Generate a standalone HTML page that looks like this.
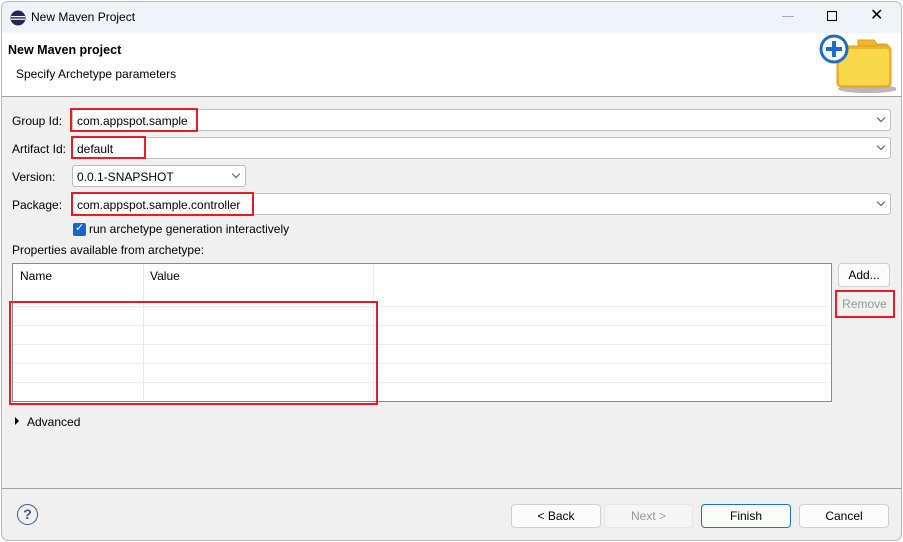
<!DOCTYPE html>
<html><head><style>
*{box-sizing:border-box;margin:0;padding:0}
body{width:903px;height:542px;background:#fff;font-family:"Liberation Sans",sans-serif;font-size:12px;color:#000;position:relative;overflow:hidden}
.abs{position:absolute}
.win{left:1px;top:1px;width:901px;height:540px;border:1px solid #b8b8b8;border-radius:7px;background:#f0f0f0;overflow:hidden}
.combo{position:absolute;background:#fff;border:1px solid #c4c4c4;border-radius:3px;height:22px}
.combo span{position:absolute;left:4px;top:4px}
.chev{position:absolute;right:6px;top:5px;width:6px;height:6px;border-right:1px solid #555;border-bottom:1px solid #555;transform:rotate(45deg)}
.red{position:absolute;border:2px solid #e81c24}
.btn{position:absolute;height:24px;border:1px solid #d0d0d0;border-radius:4px;background:#fbfbfb;text-align:center;line-height:22px}
.lbl{position:absolute;left:12px}
</style></head><body>
<div class="abs win">
</div>
<div class="abs" style="left:2px;top:2px;width:899px;height:31px;background:#eef4f8;border-radius:6px 6px 0 0"></div>
<svg class="abs" style="left:10px;top:10px" width="16" height="16"><circle cx="8" cy="8" r="7.5" fill="#2c2255"/><rect x="1" y="6" width="14" height="1.2" fill="#fff"/><rect x="1" y="8.6" width="14" height="1.2" fill="#fff"/></svg>
<div class="abs" style="left:31px;top:10px;font-size:12px">New Maven Project</div>
<div class="abs" style="left:782px;top:16px;width:12px;height:1px;background:#aaa"></div>
<div class="abs" style="left:827px;top:11px;width:10px;height:10px;border:1px solid #000"></div>
<div class="abs" style="left:870px;top:9px;font-size:16px;line-height:14px">✕</div>
<div class="abs" style="left:2px;top:33px;width:899px;height:64px;background:#fff;border-bottom:1px solid #a0a0a0"></div>
<div class="abs" style="left:8px;top:43px;font-weight:bold;font-size:12.5px">New Maven project</div>
<div class="abs" style="left:16px;top:67px">Specify Archetype parameters</div>
<svg class="abs" style="left:816px;top:32px" width="80" height="62">
<ellipse cx="52" cy="57" rx="30" ry="4" fill="#6a5a6a" opacity=".45"/>
<path d="M42 8 h16 l3 4 h8 q4 0 4 4 v5 h-31z" fill="#f0b828" stroke="#e0a020"/>
<rect x="21" y="14" width="54" height="41" rx="4" fill="#f0b828" stroke="#e0a020"/>
<rect x="23" y="17" width="50" height="36" rx="3" fill="#f8d848"/>
<circle cx="18" cy="17" r="13" fill="#fff" stroke="#1d6fc5" stroke-width="3"/>
<rect x="10" y="15" width="16" height="4" fill="#1d6fc5"/><rect x="16" y="9" width="4" height="16" fill="#1d6fc5"/>
</svg>

<div class="lbl" style="top:114px">Group Id:</div>
<div class="combo" style="left:72px;top:109px;width:819px"><span>com.appspot.sample</span><div class="chev"></div></div>
<div class="red" style="left:70px;top:108px;width:128px;height:24px"></div>
<div class="lbl" style="top:142px">Artifact Id:</div>
<div class="combo" style="left:72px;top:137px;width:819px"><span>default</span><div class="chev"></div></div>
<div class="red" style="left:71px;top:136px;width:75px;height:23px"></div>
<div class="lbl" style="top:170px">Version:</div>
<div class="combo" style="left:72px;top:165px;width:174px;border-color:#bbb"><span>0.0.1-SNAPSHOT</span><div class="chev"></div></div>
<div class="lbl" style="top:198px">Package:</div>
<div class="combo" style="left:72px;top:193px;width:819px"><span>com.appspot.sample.controller</span><div class="chev"></div></div>
<div class="red" style="left:71px;top:192px;width:183px;height:24px"></div>
<div class="abs" style="left:73px;top:223px;width:13px;height:13px;background:#1a66c4;border-radius:2px"></div>
<div class="abs" style="left:75px;top:221px;color:#fff;font-size:11px">✓</div>
<div class="abs" style="left:89px;top:222px">run archetype generation interactively</div>
<div class="lbl" style="top:243px">Properties available from archetype:</div>

<div class="abs" style="left:12px;top:263px;width:820px;height:139px;background:#fff;border:1px solid #8a8a8a"></div>
<div class="abs" style="left:20px;top:269px">Name</div>
<div class="abs" style="left:150px;top:269px">Value</div>
<div class="abs" style="left:143px;top:264px;width:1px;height:136px;background:#e8ebf0"></div>
<div class="abs" style="left:373px;top:264px;width:1px;height:136px;background:#e8ebf0"></div>
<div class="abs" style="left:13px;top:306px;width:817px;height:1px;background:#ececec"></div>
<div class="abs" style="left:13px;top:325px;width:817px;height:1px;background:#ececec"></div>
<div class="abs" style="left:13px;top:344px;width:817px;height:1px;background:#ececec"></div>
<div class="abs" style="left:13px;top:363px;width:817px;height:1px;background:#ececec"></div>
<div class="abs" style="left:13px;top:382px;width:817px;height:1px;background:#ececec"></div>
<div class="red" style="left:9px;top:301px;width:369px;height:104px"></div>

<div class="btn" style="left:838px;top:263px;width:52px">Add...</div>
<div class="btn" style="left:837px;top:292px;width:55px;border-color:#eee;color:#999;background:#f0f0f0">Remove</div>
<div class="red" style="left:835px;top:290px;width:60px;height:28px"></div>

<div class="abs" style="left:15px;top:417px;width:0;height:0;border-left:4px solid #000;border-top:4px solid transparent;border-bottom:4px solid transparent"></div>
<div class="abs" style="left:27px;top:415px">Advanced</div>

<div class="abs" style="left:2px;top:488px;width:899px;height:1px;background:#a0a0a0"></div>
<div class="abs" style="left:17px;top:504px;width:21px;height:21px;border:1.5px solid #3c5a8a;border-radius:50%;text-align:center;line-height:18px;font-weight:bold;color:#3c5a8a;font-size:14px">?</div>
<div class="btn" style="left:511px;top:504px;width:90px">&lt; Back</div>
<div class="btn" style="left:604px;top:504px;width:89px;border-color:#e6e6e6;background:#f5f5f5;color:#999">Next &gt;</div>
<div class="btn" style="left:701px;top:504px;width:90px;border-color:#1a73d0">Finish</div>
<div class="btn" style="left:799px;top:504px;width:90px">Cancel</div>
</body></html>
